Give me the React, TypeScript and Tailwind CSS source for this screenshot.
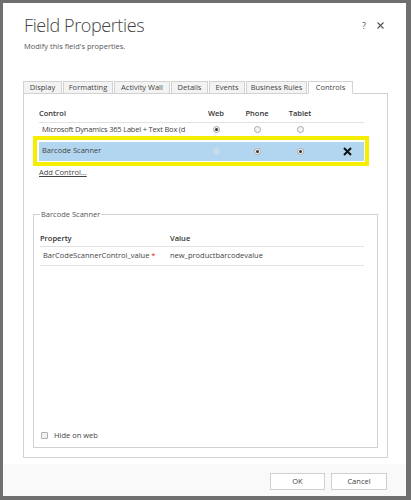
import React from "react";

const font = { fontFamily: '"Open Sans", "Noto Sans", sans-serif' };

function Radio({ checked = false, disabled = false }: { checked?: boolean; disabled?: boolean }) {
  return (
    <span
      className={`flex h-[7px] w-[7px] items-center justify-center rounded-full border ${
        disabled ? "border-[#c9dcea] bg-[#c3def1]" : "border-[#a8a8a8] bg-[#f4f4f4]"
      }`}
    >
      {checked ? <span className="h-[3px] w-[3px] rounded-full bg-[#333]" /> : null}
    </span>
  );
}

// control table columns: name | web | gap | phone | gap | tablet
function Cells({ name, web, phone, tablet }: { name: React.ReactNode; web: React.ReactNode; phone: React.ReactNode; tablet: React.ReactNode }) {
  return (
    <>
      <span className="w-[169px] shrink-0 whitespace-nowrap">{name}</span>
      <span className="flex w-[16px] shrink-0 justify-center whitespace-nowrap">{web}</span>
      <span className="w-[23px] shrink-0" />
      <span className="flex w-[20px] shrink-0 justify-center whitespace-nowrap">{phone}</span>
      <span className="w-[23px] shrink-0" />
      <span className="flex w-[20px] shrink-0 justify-center whitespace-nowrap">{tablet}</span>
    </>
  );
}

const tabs: [string, number][] = [
  ["Display", 39],
  ["Formatting", 50],
  ["Activity Wall", 56],
  ["Details", 37],
  ["Events", 36],
  ["Business Rules", 61],
  ["Controls", 45],
];

export default function App() {
  return (
    <div className="h-[500px] w-[411px] overflow-hidden bg-[#6f6f6f] pl-[3px] pt-[3px]" style={font}>
      <div className="flex h-[493px] w-[403px] flex-col bg-white text-[#444]">
        {/* header */}
        <div className="relative h-[78px] pl-[21px] pt-[10px]">
          <div className="text-[18px] font-light leading-[24px] tracking-[-0.4px] text-[#444]">Field Properties</div>
          <div className="mt-[4px] text-[7.5px] leading-[10px] text-[#555]">Modify this field's properties.</div>
          <div className="absolute right-[22px] top-[16px] flex items-center gap-[11px]">
            <span className="text-[9px] text-[#555]">?</span>
            <svg width="7" height="7" viewBox="0 0 7 7">
              <path d="M0.5 0.5 L6.5 6.5 M6.5 0.5 L0.5 6.5" stroke="#555" strokeWidth="1.1" />
            </svg>
          </div>
        </div>

        {/* tabs */}
        <div className="ml-[20px] flex w-[365px] items-end border-b border-[#cfcfcf]">
          {tabs.map(([t, w]) => {
            const active = t === "Controls";
            return (
              <div
                key={t}
                style={{ width: w }}
                className={`-mb-px mr-px flex h-[13px] items-center justify-center whitespace-nowrap border border-[#d2d2d2] text-[7.5px] leading-none ${
                  active ? "border-b-white bg-white" : "bg-[#f3f3f3]"
                }`}
              >
                {t}
              </div>
            );
          })}
        </div>

        {/* content */}
        <div className="ml-[20px] flex h-[364px] w-[365px] flex-col border-x border-b border-[#d2d2d2] pl-[15px] pt-[11px]">
          <div className="w-[325px] text-[7.5px]">
            <div className="flex h-[18px] items-center border-b border-[#e2e2e2] font-semibold text-[#333]">
              <Cells name="Control" web="Web" phone="Phone" tablet="Tablet" />
            </div>
            <div className="flex h-[13px] items-center">
              <Cells
                name={<span className="pl-[3px] tracking-[-0.2px]">Microsoft Dynamics 365 Label + Text Box (d</span>}
                web={<Radio checked />}
                phone={<Radio />}
                tablet={<Radio />}
              />
            </div>
            <div className="-ml-[6px] w-[336px] border-[4px] border-[#f6ee00] bg-white py-[1.5px] pl-[2px] pr-px">
              <div className="flex h-[19px] items-center bg-[#b2d6f0]">
                <Cells
                  name={<span className="pl-[3px]">Barcode Scanner</span>}
                  web={<Radio disabled />}
                  phone={<Radio checked />}
                  tablet={<Radio checked />}
                />
                <span className="ml-[33px] flex">
                  <svg width="9" height="9" viewBox="0 0 9 9">
                    <path d="M1 1 L8 8 M8 1 L1 8" stroke="#111" strokeWidth="2" />
                  </svg>
                </span>
              </div>
            </div>
            <div className="mt-[1px] h-[10px] leading-[10px]">
              <span className="underline">Add Control...</span>
            </div>
          </div>

          <fieldset className="-ml-[6px] mt-[32px] w-[345px] border border-[#d2d2d2] px-[6px] text-[7.5px]">
            <legend className="px-px leading-[10px] text-[#555]">Barcode Scanner</legend>
            <div className="flex h-[228px] flex-col">
              <div className="w-[324px]">
                <div className="mt-[13px] flex h-[15px] items-center border-b border-[#e2e2e2] font-semibold text-[#333]">
                  <span className="w-[130px]">Property</span>
                  <span>Value</span>
                </div>
                <div className="flex h-[19px] items-center border-b border-[#e2e2e2]">
                  <span className="w-[130px] pl-[3px]">
                    BarCodeScannerControl_value <span className="text-[#e02020]">*</span>
                  </span>
                  <span>new_productbarcodevalue</span>
                </div>
              </div>
              <div className="mt-auto mb-[6px] flex items-center gap-[6px] pl-px">
                <span className="h-[7px] w-[7px] rounded-[1px] border border-[#b0b0b0] bg-[#f2f2f2]" />
                <span>Hide on web</span>
              </div>
            </div>
          </fieldset>
        </div>

        {/* footer */}
        <div className="mt-[6px] flex flex-1 items-start justify-end gap-[6px] bg-[#f9f9f9] pr-[19px] pt-[9px] text-[7.5px]">
          <button type="button" className="h-[17px] w-[55px] border border-[#cfcfcf] bg-white text-[#444]">
            OK
          </button>
          <button type="button" className="h-[17px] w-[56px] border border-[#cfcfcf] bg-white text-[#444]">
            Cancel
          </button>
        </div>
      </div>
    </div>
  );
}
